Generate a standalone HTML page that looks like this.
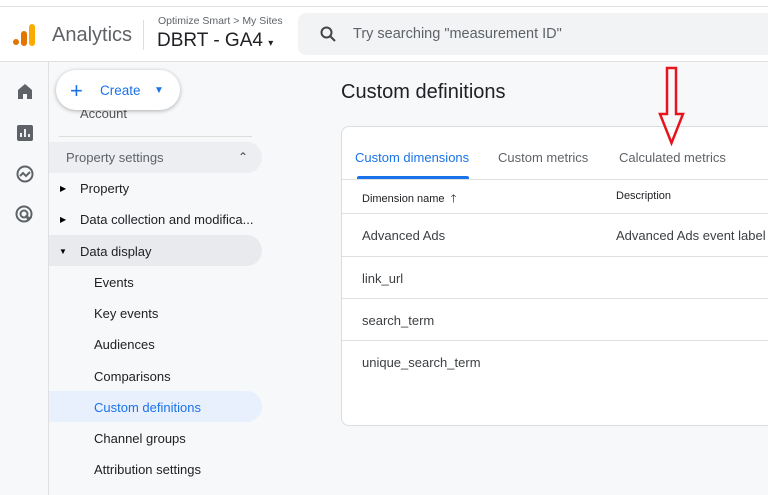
<!DOCTYPE html><html><head><style>
body{margin:0;width:768px;height:495px;overflow:hidden;background:#f7f8fa;font-family:"Liberation Sans",sans-serif;position:relative}
.a{position:absolute}
.t{color:#202124;font-size:13px;white-space:nowrap}
</style></head><body>
<div class="a" style="left:0;top:0;width:768px;height:6px;background:#fff;border-bottom:1px solid #e3e3e3"></div>
<div class="a" style="left:0;top:7px;width:768px;height:54px;background:#fff;border-bottom:1px solid #e0e0e0"></div>
<svg class="a" style="left:12px;top:22px" width="26" height="26"><circle cx="4" cy="20" r="3" fill="#e37400"/><rect x="9" y="9" width="6" height="15" rx="3" fill="#e37400"/><rect x="17" y="2" width="6" height="22" rx="3" fill="#f9ab00"/></svg>
<div class="a" style="left:52px;top:24px;font-size:20px;color:#5f6368">Analytics</div>
<div class="a" style="left:143px;top:20px;width:1px;height:30px;background:#ddd"></div>
<div class="a" style="left:158px;top:15px;font-size:10.5px;color:#5f6368">Optimize Smart &gt; My Sites</div>
<div class="a" style="left:157px;top:30px;font-size:19px;color:#202124">DBRT - GA4 <span style="font-size:10px">▾</span></div>
<div class="a" style="left:298px;top:13px;width:480px;height:42px;background:#f1f3f4;border-radius:8px"></div>
<svg class="a" style="left:320px;top:26px" width="16" height="16"><circle cx="6.5" cy="6.5" r="5" stroke="#444" stroke-width="2" fill="none"/><path d="M10 10l5 5" stroke="#444" stroke-width="2"/></svg>
<div class="a" style="left:353px;top:26px;font-size:14.5px;color:#5f6368">Try searching "measurement ID"</div>
<div class="a" style="left:48px;top:62px;width:1px;height:433px;background:#e0e0e0"></div>
<svg class="a" style="left:16px;top:82px" width="18" height="18"><path d="M2 8L9 2l7 6v9h-5v-5H7v5H2z" fill="#5f6368"/></svg>
<svg class="a" style="left:16px;top:124px" width="18" height="18"><rect x="1" y="1" width="16" height="16" rx="2" fill="#5f6368"/><path d="M5 13V9M9 13V5M13 13v-3" stroke="#fff" stroke-width="1.8"/></svg>
<svg class="a" style="left:15px;top:164px" width="20" height="20"><circle cx="10" cy="10" r="7.5" stroke="#5f6368" stroke-width="2" fill="none"/><path d="M5 12l3-3 3 3 4-4" stroke="#5f6368" stroke-width="2" fill="none"/></svg>
<svg class="a" style="left:15px;top:205px" width="20" height="20"><circle cx="9" cy="9" r="7.5" stroke="#5f6368" stroke-width="2" fill="none"/><circle cx="9" cy="9" r="3.5" stroke="#5f6368" stroke-width="2" fill="none"/><path d="M10 10l7 3-3 1-1 3z" fill="#5f6368"/></svg>
<div class="a t" style="left:80px;top:106px;color:#555">Account</div>
<div class="a" style="left:56px;top:70px;width:124px;height:40px;background:#fff;border-radius:20px;box-shadow:0 1px 4px rgba(0,0,0,.3)"></div>
<div class="a" style="left:70px;top:78px;font-size:22px;color:#1a73e8">+</div>
<div class="a" style="left:100px;top:83px;font-size:13.5px;color:#1a73e8">Create</div>
<div class="a" style="left:154px;top:85px;font-size:10px;color:#1a73e8">▼</div>
<div class="a" style="left:59px;top:136px;width:193px;height:1px;background:#ddd"></div>
<div class="a" style="left:49px;top:142px;width:213px;height:31px;background:#eceef1;border-radius:0 16px 16px 0"></div>
<div class="a t" style="left:66px;top:150px;color:#5f6368">Property settings</div>
<div class="a" style="left:238px;top:150px;font-size:12px;color:#444">⌃</div>
<div class="a" style="left:49px;top:235px;width:213px;height:31px;background:#e8eaed;border-radius:0 16px 16px 0"></div>
<div class="a" style="left:49px;top:391px;width:213px;height:31px;background:#e8f0fe;border-radius:0 16px 16px 0"></div>
<div class="a" style="left:60px;top:184px;font-size:8px">▶</div><div class="a t" style="left:80px;top:181px">Property</div>
<div class="a" style="left:60px;top:215px;font-size:8px">▶</div><div class="a t" style="left:80px;top:212px">Data collection and modifica...</div>
<div class="a" style="left:59px;top:247px;font-size:8px">▼</div><div class="a t" style="left:80px;top:244px">Data display</div>
<div class="a t" style="left:94px;top:275px">Events</div>
<div class="a t" style="left:94px;top:306px">Key events</div>
<div class="a t" style="left:94px;top:337px">Audiences</div>
<div class="a t" style="left:94px;top:369px">Comparisons</div>
<div class="a t" style="left:94px;top:400px;color:#1a73e8">Custom definitions</div>
<div class="a t" style="left:94px;top:431px">Channel groups</div>
<div class="a t" style="left:94px;top:462px">Attribution settings</div>
<div class="a" style="left:341px;top:81px;font-size:20px;color:#202124">Custom definitions</div>
<div class="a" style="left:341px;top:126px;width:440px;height:298px;background:#fff;border:1px solid #dadce0;border-radius:8px"></div>
<div class="a" style="left:355px;top:150px;font-size:13px;color:#1a73e8">Custom dimensions</div>
<div class="a" style="left:357px;top:176px;width:112px;height:3px;background:#1a73e8;border-radius:2px 2px 0 0"></div>
<div class="a" style="left:498px;top:150px;font-size:13px;color:#5f6368">Custom metrics</div>
<div class="a" style="left:619px;top:150px;font-size:13px;color:#5f6368">Calculated metrics</div>
<div class="a" style="left:342px;top:179px;width:426px;height:1px;background:#e0e0e0"></div>
<div class="a" style="left:362px;top:190px;font-size:11px;color:#202124">Dimension name &nbsp;🡑</div>
<div class="a" style="left:616px;top:190px;font-size:11px;color:#202124">Description</div>
<div class="a" style="left:342px;top:213px;width:426px;height:1px;background:#e0e0e0"></div>
<div class="a" style="left:342px;top:256px;width:426px;height:1px;background:#e0e0e0"></div>
<div class="a" style="left:342px;top:298px;width:426px;height:1px;background:#e0e0e0"></div>
<div class="a" style="left:342px;top:340px;width:426px;height:1px;background:#e0e0e0"></div>
<div class="a t" style="left:362px;top:228px;color:#3c4043">Advanced Ads</div>
<div class="a t" style="left:616px;top:228px;color:#3c4043">Advanced Ads event label</div>
<div class="a t" style="left:362px;top:271px;color:#3c4043">link_url</div>
<div class="a t" style="left:362px;top:313px;color:#3c4043">search_term</div>
<div class="a t" style="left:362px;top:355px;color:#3c4043">unique_search_term</div>
<svg class="a" style="left:658px;top:66px" width="28" height="80"><path d="M9 2h9v46h7L13.5 77 2 48h7z" fill="none" stroke="#e8141c" stroke-width="2.5"/></svg>
</body></html>
